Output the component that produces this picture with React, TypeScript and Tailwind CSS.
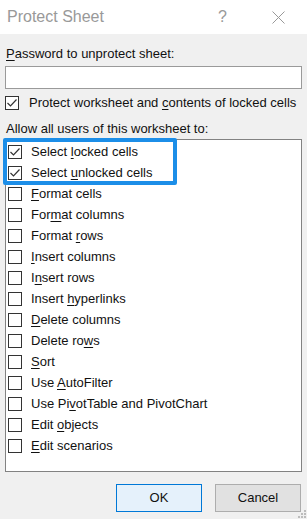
import React from 'react';

type Item = { pre: string; key: string; post: string; checked?: boolean };

const items: Item[] = [
  { pre: 'Select ', key: 'l', post: 'ocked cells', checked: true },
  { pre: 'Select ', key: 'u', post: 'nlocked cells', checked: true },
  { pre: '', key: 'F', post: 'ormat cells' },
  { pre: 'For', key: 'm', post: 'at columns' },
  { pre: 'Format ', key: 'r', post: 'ows' },
  { pre: '', key: 'I', post: 'nsert columns' },
  { pre: 'I', key: 'n', post: 'sert rows' },
  { pre: 'Insert ', key: 'h', post: 'yperlinks' },
  { pre: '', key: 'D', post: 'elete columns' },
  { pre: 'Delete ro', key: 'w', post: 's' },
  { pre: '', key: 'S', post: 'ort' },
  { pre: 'Use ', key: 'A', post: 'utoFilter' },
  { pre: 'Use Pi', key: 'v', post: 'otTable and PivotChart' },
  { pre: 'Edit ', key: 'o', post: 'bjects' },
  { pre: '', key: 'E', post: 'dit scenarios' },
];

function Check({ checked }: { checked?: boolean }) {
  return (
    <span className="w-[14px] h-[14px] border border-[#333] bg-white flex items-center justify-center shrink-0">
      {checked && (
        <svg width="12" height="12" viewBox="0 0 12 12" fill="none">
          <path d="M1.5 6 L4.5 9 L10.5 2.5" stroke="#333" strokeWidth="1.2" />
        </svg>
      )}
    </span>
  );
}

function Label({ pre, k, post }: { pre: string; k: string; post: string }) {
  return (
    <span className="whitespace-nowrap">
      {pre}
      <u className="underline-offset-2">{k}</u>
      {post}
    </span>
  );
}

export default function App() {
  return (
    <div
      className="relative w-[307px] h-[519px] bg-[#f0f0f0] flex flex-col text-[13px] text-[#111] overflow-hidden"
      style={{ fontFamily: '"Liberation Sans", Arial, sans-serif' }}
    >
      <header className="h-[34px] bg-white flex items-center shrink-0 text-[#999]">
        <span className="ml-[7px] text-[16px] flex-1">Protect Sheet</span>
        <span className="text-[16px] w-[10px] mr-[44px]">?</span>
        <svg width="13" height="13" viewBox="0 0 13 13" className="mr-[22px]">
          <path d="M0.5 0.5 L12.5 12.5 M12.5 0.5 L0.5 12.5" stroke="#999" strokeWidth="1" />
        </svg>
      </header>

      <main className="flex-1 flex flex-col px-[5px]">
        <div className="mt-[11px] ml-[1px] leading-[18px]">
          <Label pre="" k="P" post="assword to unprotect sheet:" />
        </div>
        <div className="mt-[3px] h-[23px] border border-[#9a9a9a] bg-white" />

        <div className="mt-[6px] flex items-center gap-[10px] h-[16px]">
          <Check checked />
          <Label pre="Protect worksheet and " k="c" post="ontents of locked cells" />
        </div>

        <div className="mt-[9px] ml-[1px] leading-[18px]">Allow all users of this worksheet to:</div>

        <div className="relative mt-[1px] h-[333px] border border-[#828282] bg-white pt-[1px]">
          {items.map((it, i) => (
            <div key={i} className="h-[21px] flex items-center gap-[9px] pl-[2px]">
              <Check checked={it.checked} />
              <Label pre={it.pre} k={it.key} post={it.post} />
            </div>
          ))}
          <div className="absolute left-[-3px] top-[-2px] w-[174px] h-[47px] border-[4px] border-[#1c8ee8] rounded-[2px]" />
        </div>

        <div className="mt-[12px] flex justify-end gap-[13px] pr-[1px]">
          <button className="w-[86px] h-[28px] border border-[#0078d7] bg-[#e5f1fb] text-[13px]">OK</button>
          <button className="w-[86px] h-[28px] border border-[#adadad] bg-[#e1e1e1] text-[13px]">Cancel</button>
        </div>
      </main>

      <svg width="8" height="8" viewBox="0 0 8 8" className="absolute left-[298px] top-[510px]">
        <rect x="6" y="0" width="2" height="2" fill="#bcbcbc" />
        <rect x="3" y="3" width="2" height="2" fill="#bcbcbc" />
        <rect x="6" y="3" width="2" height="2" fill="#bcbcbc" />
        <rect x="0" y="6" width="2" height="2" fill="#bcbcbc" />
        <rect x="3" y="6" width="2" height="2" fill="#bcbcbc" />
        <rect x="6" y="6" width="2" height="2" fill="#bcbcbc" />
      </svg>
    </div>
  );
}
